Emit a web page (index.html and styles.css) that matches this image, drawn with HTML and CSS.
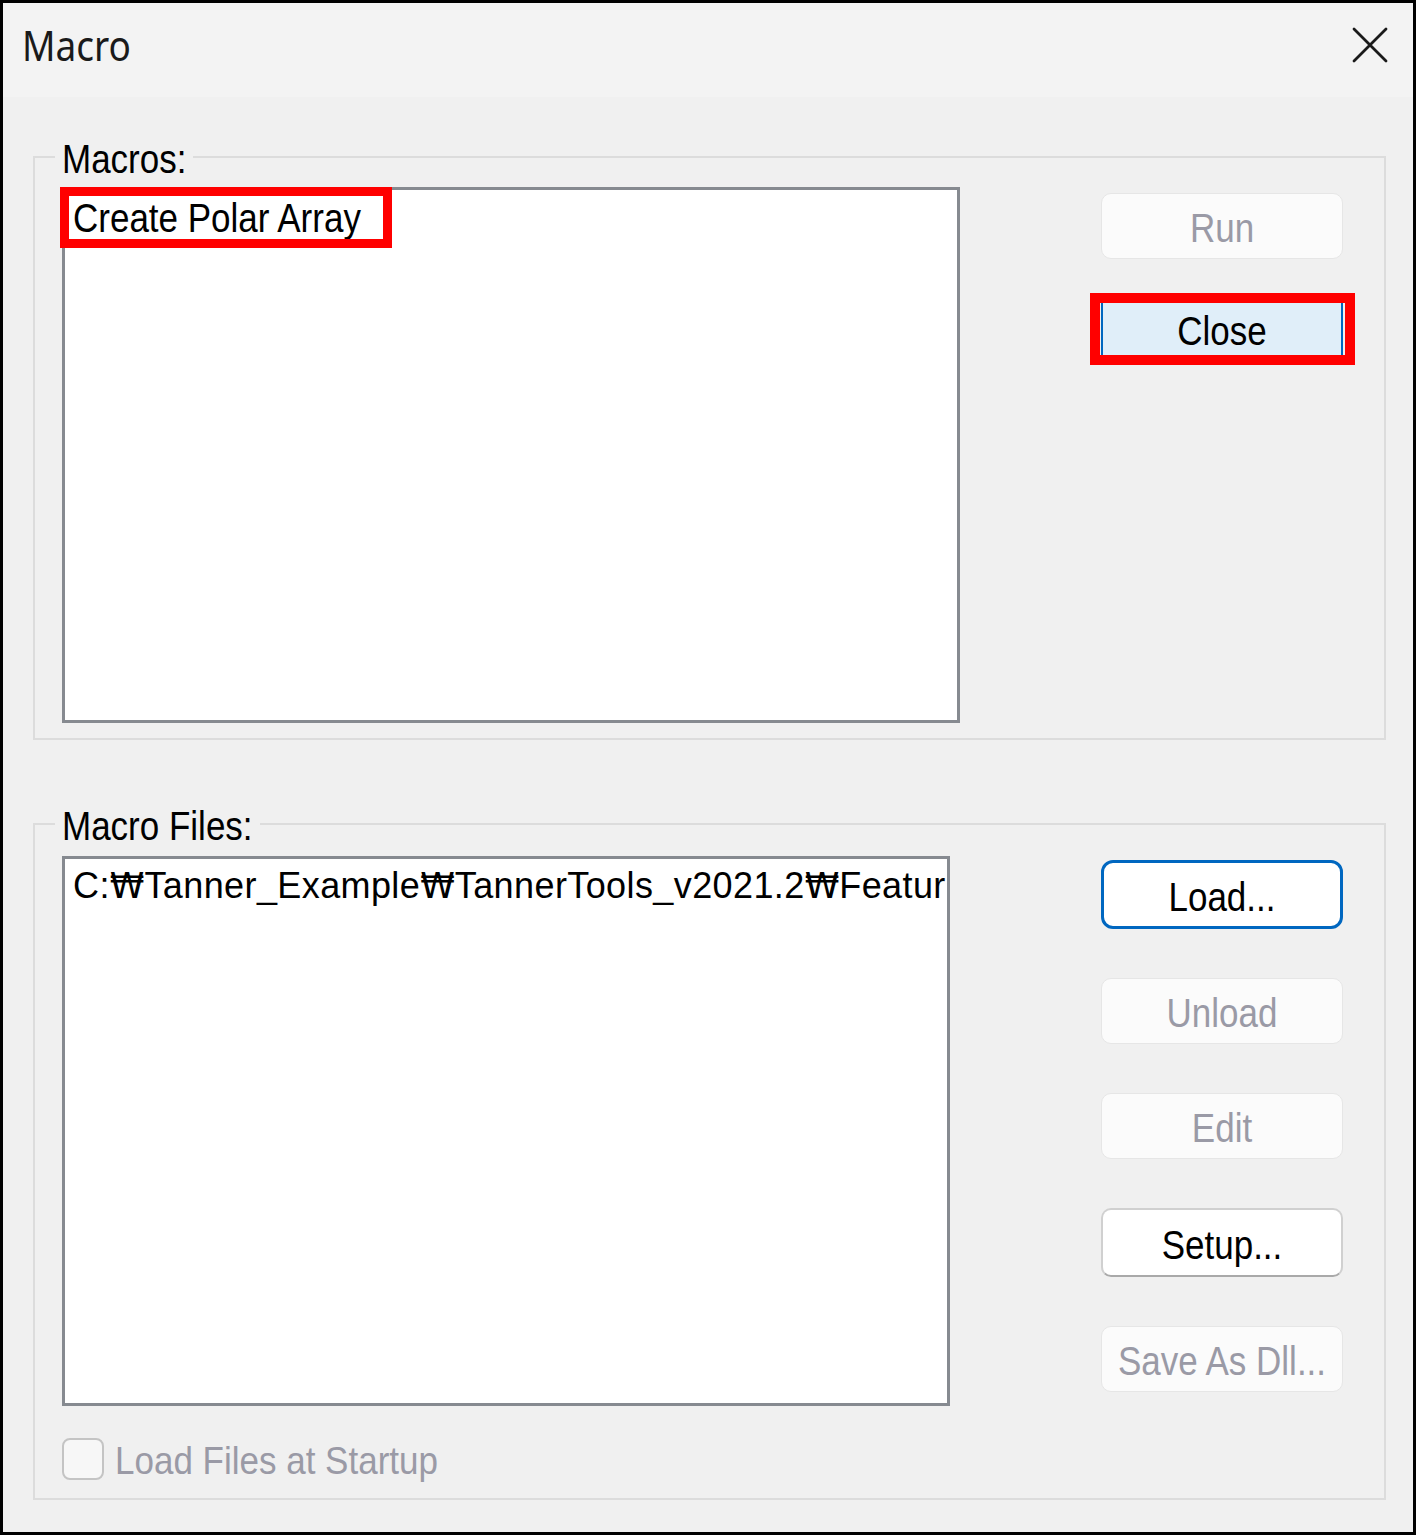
FILE: index.html
```html
<!DOCTYPE html>
<html lang="en">
<head>
<meta charset="utf-8">
<title>Macro</title>
<link rel="stylesheet" href="styles.css">
</head>
<body>
<div class="dialog">
  <div class="titlebar">
    <span class="title">Macro</span>
    <svg class="xbtn" viewBox="0 0 36 36" aria-label="Close"><path d="M2 2 L34 34 M34 2 L2 34" stroke="#1a1a1a" stroke-width="2.8" stroke-linecap="round" fill="none"/></svg>
  </div>
  <div class="content">
    <fieldset class="group">
      <legend class="legend"><span class="tx">Macros:</span></legend>
      <div class="row row1">
        <div class="listwrap">
          <div class="list list1">
            <div class="item"><span class="tx">Create Polar Array</span></div>
          </div>
          <div class="annot annot-item"></div>
        </div>
        <div class="btncol col1">
          <button class="btn disabled run"><span class="tx">Run</span></button>
          <div class="btnwrap">
            <button class="btn default"><span class="tx">Close</span></button>
            <div class="annot annot-close"></div>
          </div>
        </div>
      </div>
    </fieldset>
    <fieldset class="group group2">
      <legend class="legend"><span class="tx">Macro Files:</span></legend>
      <div class="row row2">
        <div class="leftcol">
          <div class="list list2">
            <div class="item path">C:<span class="won">₩</span>Tanner_Example<span class="won">₩</span>TannerTools_v2021.2<span class="won">₩</span>Featur</div>
          </div>
          <div class="checkrow">
            <span class="check"></span>
            <span class="checklabel tx">Load Files at Startup</span>
          </div>
        </div>
        <div class="btncol col2">
          <button class="btn focus"><span class="tx">Load...</span></button>
          <button class="btn disabled"><span class="tx">Unload</span></button>
          <button class="btn disabled"><span class="tx">Edit</span></button>
          <button class="btn normal"><span class="tx">Setup...</span></button>
          <button class="btn disabled"><span class="tx">Save As Dll...</span></button>
        </div>
      </div>
    </fieldset>
  </div>
</div>
</body>
</html>
```
FILE: styles.css
```css
* { box-sizing: border-box; }
html, body { margin: 0; padding: 0; background: #ffffff; }
body { font-family: "Liberation Sans", Arial, sans-serif; color: #000; }

.dialog {
  width: 1416px;
  height: 1535px;
  border: 3px solid #000;
  background: #f0f0f0;
  display: flex;
  flex-direction: column;
}

.titlebar {
  flex: none;
  height: 94px;
  background: #f3f3f3;
  display: flex;
  justify-content: space-between;
  align-items: flex-start;
  padding: 0 25px 0 19px;
}
.title {
  font-family: "Noto Sans", "Open Sans", sans-serif;
  font-size: 37px;
  line-height: 50px;
  margin-top: 17px;
  color: #1a1a1a;
  display: inline-block;
  transform: scaleY(1.12);
}
.xbtn { width: 36px; height: 36px; margin-top: 24px; }

.content { padding: 40px 27px 0 30px; }

.group {
  border: 2px solid #dcdcdc;
  margin: 0;
  padding: 0;
  min-width: 0;
}
.group2 { margin-top: 64px; }
.legend {
  margin-left: 20px;
  padding: 0 7px;
  font-size: 35px;
  line-height: 40px;
}

.tx { display: inline-block; transform: translateY(2px) scaleY(1.18); }

.row { display: flex; }
.row1 { padding: 10px 41px 15px 27px; }
.row2 { padding: 12px 41px 18px 27px; }

.listwrap { position: relative; }
.list {
  background: #fff;
  border: 3px solid #868a90;
  overflow: hidden;
}
.list1 { width: 898px; height: 536px; }
.list2 { width: 888px; height: 550px; }

.item {
  font-size: 35px;
  line-height: 44px;
  height: 48px;
  padding: 4px 0 0 8px;
  white-space: nowrap;
}
.item.path { font-size: 36px; padding-top: 5px; letter-spacing: 0.4px; color: #000; }
.won {
  font-family: "DejaVu Sans", "Noto Sans CJK KR", sans-serif;
  font-size: 35px;
  line-height: 1;
  letter-spacing: 0;
}

.annot {
  position: absolute;
  border: 9px solid #ff0000;
  pointer-events: none;
}
.annot-item { left: -2px; top: 0; width: 332px; height: 61px; }
.annot-close { left: -11px; top: -3px; width: 265px; height: 72px; border-width: 10px; }

.btncol {
  margin-left: auto;
  display: flex;
  flex-direction: column;
  align-items: flex-start;
}
.col1 .run { margin-top: 6px; }
.btnwrap { position: relative; margin-top: 37px; }
.col2 { margin-top: 4px; gap: 49px; }

.btn {
  width: 242px;
  height: 66px;
  padding: 0;
  font-family: "Liberation Sans", Arial, sans-serif;
  font-size: 35px;
  line-height: 40px;
  color: #000;
  background: #fbfbfb;
  border: 1px solid #e6e6e6;
  border-radius: 10px;
  display: flex;
  align-items: center;
  justify-content: center;
}
.btn.disabled { color: #9a9aa6; }
.btn.default {
  background: #e0eef9;
  border: 2px solid #0067c0;
  border-radius: 4px;
}
.btn.focus {
  height: 69px;
  background: #fff;
  border: 3px solid #0067c0;
  border-radius: 12px;
}
.btn.normal {
  height: 69px;
  background: #fff;
  border: 2px solid #d0d0d0;
  border-bottom-color: #a9a9a9;
}

.leftcol { display: flex; flex-direction: column; }
.checkrow { display: flex; align-items: center; margin-top: 32px; }
.check {
  width: 42px;
  height: 42px;
  border: 2px solid #c4c4c4;
  border-radius: 8px;
  background: #f7f7f7;
}
.checklabel {
  font-size: 35px;
  line-height: 40px;
  color: #9a9aa6;
  margin-left: 11px;
  transform: translateY(2px) scaleY(1.12);
}
```
